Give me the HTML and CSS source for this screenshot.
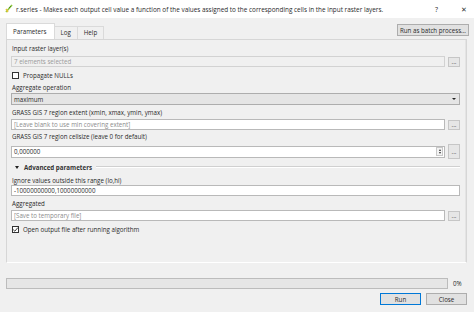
FILE: index.html
```html
<!DOCTYPE html>
<html lang="en">
<head>
    <meta charset="UTF-8">
    <title>r.series</title>
    <link rel="stylesheet" href="styles.css">
</head>
<body>
    <div class="window">
        <div class="titlebar">
            <svg class="app-icon" width="8" height="9" viewBox="0 0 8 9">
                <path d="M1 8 L7 1" stroke="#8cc63f" stroke-width="1.6"/>
                <path d="M1 5 L3 8" stroke="#e8c53a" stroke-width="1.4"/>
                <path d="M4 4 L6 2" stroke="#3a7d1e" stroke-width="0.8"/>
            </svg>
            <span class="title">r.series - Makes each output cell value a function of the values assigned to the corresponding cells in the input raster layers.</span>
            <span class="help">?</span>
            <span class="close">&#x2715;</span>
        </div>

        <div class="body">
            <div class="tabbar">
                <div class="tab active">Parameters</div>
                <div class="tab">Log</div>
                <div class="tab">Help</div>
                <div class="spacer"></div>
                <button class="btn batch">Run as batch process...</button>
            </div>

            <div class="panel">
                <div class="label first">Input raster layer(s)</div>
                <div class="row r1">
                    <div class="input disabled">7 elements selected</div>
                    <button class="btn dots">...</button>
                </div>

                <div class="check-row c1">
                    <span class="checkbox"></span>
                    <span>Propagate NULLs</span>
                </div>

                <div class="label l2">Aggregate operation</div>
                <div class="combo">
                    <span>maximum</span>
                    <span class="arrow"></span>
                </div>

                <div class="label l3">GRASS GIS 7 region extent (xmin, xmax, ymin, ymax)</div>
                <div class="row r3">
                    <div class="input placeholder">[Leave blank to use min covering extent]</div>
                    <button class="btn dots">...</button>
                </div>

                <div class="label l4">GRASS GIS 7 region cellsize (leave 0 for default)</div>
                <div class="row r4">
                    <div class="input spin">
                        <span>0,000000</span>
                        <span class="spinner"><i class="up"></i><i class="down"></i></span>
                    </div>
                    <button class="btn dots tall">...</button>
                </div>

                <div class="advanced">
                    <span class="tri"></span>
                    <span class="adv-title">Advanced parameters</span>
                    <span class="adv-line"></span>
                </div>

                <div class="label l5">Ignore values outside this range (lo,hi)</div>
                <div class="input full">-10000000000,10000000000</div>

                <div class="label l6">Aggregated</div>
                <div class="row r6">
                    <div class="input placeholder">[Save to temporary file]</div>
                    <button class="btn dots">...</button>
                </div>

                <div class="check-row c2">
                    <span class="checkbox checked">
                        <svg width="7" height="7" viewBox="0 0 7 7"><path d="M1.2 3.6 L2.8 5.2 L5.9 1.6" fill="none" stroke="#222" stroke-width="0.9"/></svg>
                    </span>
                    <span>Open output file after running algorithm</span>
                </div>
            </div>

            <div class="progress-row">
                <div class="progress"></div>
                <span class="pct">0%</span>
            </div>

            <div class="actions">
                <button class="btn run">Run</button>
                <button class="btn close-btn">Close</button>
            </div>
        </div>
    </div>
</body>
</html>
```

FILE: styles.css
```css
body {
    margin: 0;
    font-family: "Open Sans", "Noto Sans", sans-serif;
    font-size: 6.2px;
    color: #2a2a2a;
    background: #f0f0f0;
}

.window {
    width: 474px;
    height: 312px;
    overflow: hidden;
    background: #f0f0f0;
}

.titlebar {
    height: 18px;
    background: #ffffff;
    display: flex;
    align-items: center;
    padding-left: 5px;
}

.app-icon {
    margin-right: 3px;
    margin-top: -1px;
}

.title {
    flex: 1;
    font-size: 6.4px;
    color: #2a2a2a;
}

.help {
    font-size: 7px;
    width: 26px;
}

.close {
    font-size: 7px;
    width: 13px;
    color: #333;
}

.body {
    padding: 5px 7px 0 6px;
}

.tabbar {
    display: flex;
    align-items: flex-end;
    height: 16px;
}

.tab {
    height: 12px;
    line-height: 12px;
    padding: 0 6px;
    border: 1px solid #dadada;
    border-bottom: none;
    border-left: none;
    background: #f0f0f0;
}

.tab.active {
    height: 15px;
    line-height: 15px;
    background: #ffffff;
    border-left: 1px solid #dadada;
    padding: 0 7px 0 6px;
}

.spacer {
    flex: 1;
}

.btn {
    font-family: inherit;
    font-size: 6.2px;
    color: #2a2a2a;
    background: #e1e1e1;
    border: 1px solid #adadad;
    padding: 0;
    margin: 0;
    box-sizing: border-box;
}

.batch {
    align-self: flex-start;
    margin-top: 1px;
    margin-right: -2px;
    height: 12px;
    padding: 0 2px;
}

.panel {
    height: 224px;
    box-sizing: border-box;
    border: 1px solid #d6d6d6;
    border-bottom-color: #ffffff;
    box-shadow: inset -1px 0 0 #e4e4e4;
    padding: 4px 6px 0 4px;
}

.label {
    height: 9px;
    line-height: 9px;
    padding-left: 1px;
}

.l2 { margin-top: 3px; }
.l3 { margin-top: 3px; }
.l4 { margin-top: 2px; }
.l5 { margin-top: 4px; }
.l6 { margin-top: 3px; }

.row {
    display: flex;
    align-items: center;
    gap: 3px;
    height: 11px;
}

.r1 { margin-top: 3px; }
.r3 { margin-top: 2px; }
.r4 { margin-top: 4px; height: 13px; }
.r6 { margin-top: 2px; }

.input {
    flex: 1;
    height: 11px;
    box-sizing: border-box;
    background: #ffffff;
    border: 1px solid #b9b9b9;
    line-height: 9px;
    padding-left: 2px;
    white-space: nowrap;
    overflow: hidden;
}

.input.disabled {
    background: #f0f0f0;
    border-color: #d2d2d2;
    color: #9a9a9a;
}

.input.placeholder {
    color: #8c8c8c;
}

.input.full {
    flex: none;
    width: 100%;
}

.input.spin {
    height: 12px;
    display: flex;
    align-items: center;
    justify-content: space-between;
    line-height: 10px;
}

.spinner {
    width: 7px;
    height: 9px;
    margin-right: 1px;
    border: 1px solid #c8c8c8;
    box-sizing: border-box;
    background: #f3f3f3;
    display: flex;
    flex-direction: column;
    align-items: center;
    justify-content: space-around;
}

.spinner i {
    width: 0;
    height: 0;
    border-left: 1.5px solid transparent;
    border-right: 1.5px solid transparent;
}

.spinner .up {
    border-bottom: 2px solid #333;
}

.spinner .down {
    border-top: 2px solid #333;
}

.dots {
    width: 12px;
    height: 10px;
    line-height: 6px;
    color: #555;
    border-color: #c6c6c6;
    background: #e6e6e6;
}

.dots.tall {
    height: 15px;
}

.check-row {
    display: flex;
    align-items: center;
    height: 9px;
    gap: 4px;
    padding-left: 1px;
}

.c1 { margin-top: 4px; }
.c2 { margin-top: 4px; }

.checkbox {
    width: 7px;
    height: 7px;
    box-sizing: border-box;
    border: 1px solid #333;
    background: #ffffff;
    display: flex;
}

.checkbox svg {
    margin: -1px;
}

.combo {
    margin-top: 1px;
    height: 12px;
    box-sizing: border-box;
    background: #e5e5e5;
    border: 1px solid #adadad;
    display: flex;
    align-items: center;
    justify-content: space-between;
    padding: 0 3px 0 2px;
}

.combo .arrow {
    width: 0;
    height: 0;
    border-left: 2px solid transparent;
    border-right: 2px solid transparent;
    border-top: 2.5px solid #222;
}

.advanced {
    margin-top: 4px;
    height: 10px;
    display: flex;
    align-items: center;
    padding-left: 4px;
}

.tri {
    width: 0;
    height: 0;
    border-left: 2.5px solid transparent;
    border-right: 2.5px solid transparent;
    border-top: 3.5px solid #222;
    margin-right: 5px;
}

.adv-title {
    font-weight: bold;
    color: #333;
}

.adv-line {
    flex: 1;
    height: 0;
    margin-left: 4px;
    margin-top: -1px;
    border-top: 1px solid #d0d0d0;
    border-bottom: 1px solid #ffffff;
}

.progress-row {
    margin-top: 15px;
    display: flex;
    align-items: center;
    height: 11px;
}

.progress {
    width: 442px;
    height: 11px;
    box-sizing: border-box;
    background: #e6e6e6;
    border: 1px solid #bcbcbc;
}

.pct {
    margin-left: 5px;
}

.actions {
    margin-top: 4px;
    display: flex;
    justify-content: flex-end;
    gap: 5px;
}

.actions .btn {
    width: 41px;
    height: 12px;
}

.run {
    border-color: #0078d7;
}
```
